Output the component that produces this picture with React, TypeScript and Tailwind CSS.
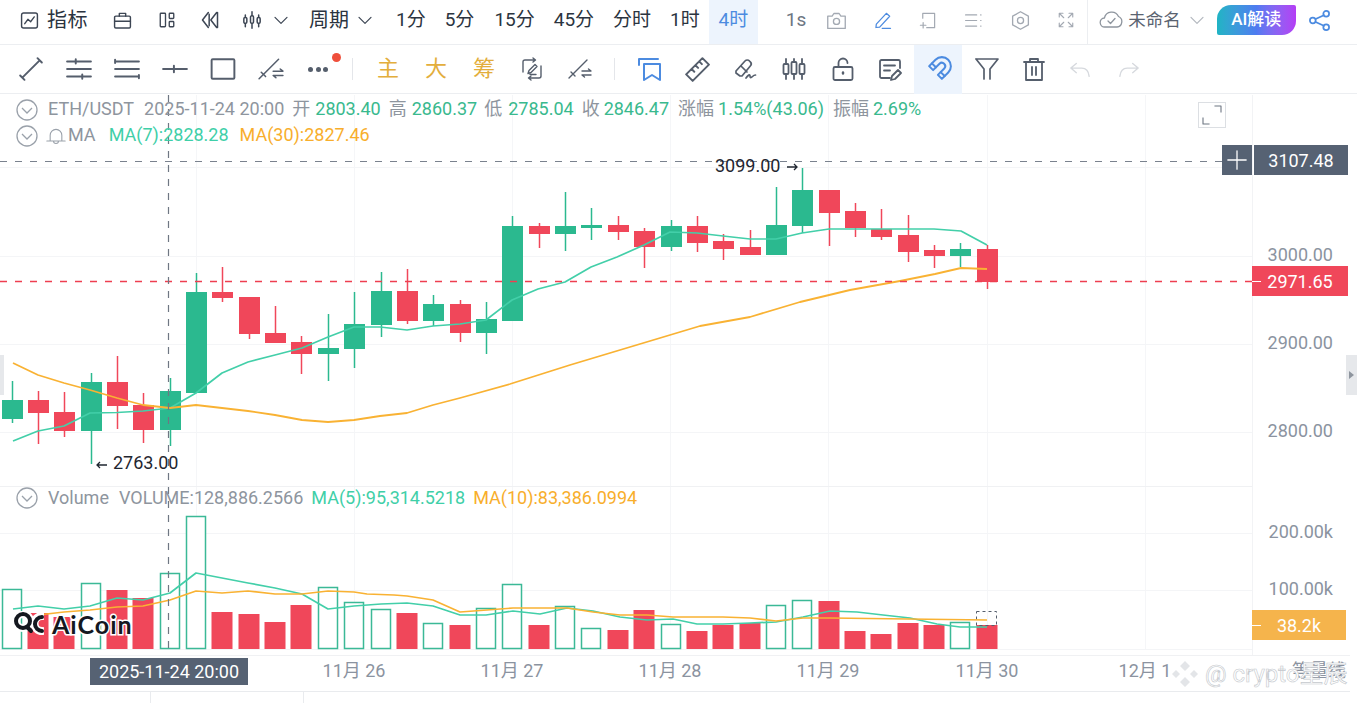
import type { ReactNode } from "react";

const cjk = "font-['Roboto','Noto_Sans_CJK_SC',sans-serif]";

// candles: [body top, body bottom, wick top, wick bottom, up?]
const candles: [number, number, number, number, boolean][] = [
  [400, 419, 381, 423, true],
  [400, 413, 391, 444, false],
  [412, 431, 392, 437, false],
  [382, 431, 373, 464, true],
  [382, 406, 356, 429, false],
  [405, 430, 393, 443, false],
  [391, 430, 378, 446, true],
  [292, 393, 273, 393, true],
  [292, 298, 267, 302, false],
  [297, 334, 297, 339, false],
  [333, 343, 306, 343, false],
  [342, 354, 336, 374, false],
  [348, 354, 314, 381, true],
  [324, 349, 292, 368, true],
  [291, 325, 272, 337, true],
  [291, 321, 269, 324, false],
  [304, 321, 295, 326, true],
  [304, 333, 300, 342, false],
  [319, 333, 302, 354, true],
  [226, 321, 216, 321, true],
  [226, 234, 223, 248, false],
  [226, 234, 192, 251, true],
  [225, 228, 208, 240, true],
  [225, 232, 216, 240, false],
  [231, 247, 228, 268, false],
  [226, 247, 220, 251, true],
  [226, 243, 216, 252, false],
  [241, 249, 234, 260, false],
  [247, 255, 230, 255, false],
  [225, 255, 187, 255, true],
  [190, 226, 168, 233, true],
  [190, 213, 190, 246, false],
  [211, 228, 203, 237, false],
  [229, 237, 209, 240, false],
  [235, 252, 215, 262, false],
  [250, 256, 245, 268, false],
  [249, 256, 243, 267, true],
  [249, 282, 245, 289, false],
];

const volumes: [number, boolean][] = [
  [589, true], [613, false], [617, false], [583, true], [590, false], [598, false],
  [573, true], [516, true], [612, false], [614, false], [622, false], [605, false],
  [587, true], [602, true], [609, true], [613, false], [623, true], [625, false],
  [608, true], [584, true], [625, false], [606, true], [628, true], [630, false],
  [610, false], [624, true], [631, false], [625, false], [623, false], [605, true],
  [600, true], [601, false], [631, false], [634, false], [623, false], [625, false],
  [622, true], [625, false],
];

const cx = (i: number) => 11.5 + i * 26.36;

const ma7 = "13,441 38,431 64,426 90,413 117,412.5 143,411 170,408 196,393 222,373 248,362 275,355 302,348 328,337 354,327 380,327 407,330 433,326 460,324 486,320 512,300 538,289 565,282 591,267 617,257 644,245 670,232 697,233 723,236 750,239 776,239 802,233 829,229 855,229 881,229 908,229 934,229 961,231 987,245";
const ma30 = "13,363 38,375 64,383 90,390 117,398 143,405 170,408 196,405 222,408 248,411 275,415 302,420 328,422 354,420 380,416 407,413 433,405 460,398 510,384 570,365 640,344 700,326 750,317 800,302 850,290 900,281 935,274 961,268 987,269";
const volMa5 = "13,609 38,606 64,609 90,606 117,598 143,600 170,593 196,573 222,578 248,583 275,588 302,594 328,609 354,606 381,604 407,603 433,606 460,615 486,615 513,611 540,614 567,608 593,611 620,617 647,620 673,619 697,624 723,624 750,623 776,622 803,617 830,611 857,612 883,615 910,618 937,624 960,627 987,627";
const volMa10 = "38,615 64,612 90,610 117,607 143,606 170,600 196,591 222,593 248,591 275,594 302,594 328,591 354,592 367,594 394,595 407,596 433,600 460,612 487,610 513,608 567,608 593,612 620,615 647,615 673,617 723,617 750,618 776,621 803,618 830,618 987,620";

function Ic({ size = 24, className = "", children }: { size?: number; className?: string; children: ReactNode }) {
  return (
    <svg
      width={size}
      height={size}
      viewBox="0 0 24 24"
      fill="none"
      stroke="currentColor"
      strokeWidth="1.8"
      strokeLinecap="round"
      strokeLinejoin="round"
      className={`shrink-0 ${className}`}
    >
      {children}
    </svg>
  );
}

function Chevron({ className = "" }: { className?: string }) {
  return (
    <Ic size={16} className={className}>
      <polyline points="3,8 12,17 21,8" />
    </Ic>
  );
}

function CircleChevron() {
  return (
    <svg width="22" height="22" viewBox="0 0 22 22" fill="none" stroke="#9aa1aa" strokeWidth="1.3" className="shrink-0">
      <circle cx="11" cy="11" r="10" />
      <polyline points="6,9 11,14 16,9" />
    </svg>
  );
}

function Period({ label, className }: { label: string; className: string }) {
  return <span className={`text-[19px] text-[#2b3440] ${className}`}>{label}</span>;
}

function TopBar() {
  return (
    <header className={`flex h-[45px] items-center border-b border-[#eceef1] pb-[4px] text-[#3d4654] ${cjk}`}>
      <Ic size={19} className="ml-[20px]">
        <rect x="2" y="2.5" width="20" height="19" rx="2.5" />
        <polyline points="6,16 10,10.5 13.5,13.5 18,7.5" />
      </Ic>
      <span className="ml-[8px] text-[20px] tracking-[0.5px] text-[#2b3440]">指标</span>
      <Ic size={19} className="ml-[25px]">
        <rect x="2" y="6.5" width="20" height="15" rx="1.5" />
        <path d="M8 6.5V3h8v3.5M2 13h20" />
      </Ic>
      <Ic size={18} className="ml-[26px]">
        <rect x="3" y="3" width="7" height="18" rx="1" />
        <rect x="15" y="3" width="6" height="7" rx="1" />
        <rect x="15" y="14" width="6" height="7" rx="1" />
      </Ic>
      <Ic size={20} className="ml-[24px]">
        <path d="M10 3 3 12l7 9M11 5v14" />
        <path d="M20 3l-7 9 7 9M21 3v18" />
      </Ic>
      <Ic size={20} className="ml-[22px]">
        <path d="M4 6v14M12 2v20M20 6v14" />
        <rect x="2.2" y="9" width="3.6" height="7" rx="1.5" fill="#fff" />
        <rect x="10.2" y="7" width="3.6" height="9" rx="1.5" fill="#fff" />
        <rect x="18.2" y="9" width="3.6" height="7" rx="1.5" fill="#fff" />
      </Ic>
      <Chevron className="ml-[11px]" />
      <span className="ml-[20px] text-[20px] text-[#2b3440]">周期</span>
      <Chevron className="ml-[8px]" />
      <Period label="1分" className="ml-[23px]" />
      <Period label="5分" className="ml-[19px]" />
      <Period label="15分" className="ml-[20px]" />
      <Period label="45分" className="ml-[19px]" />
      <Period label="分时" className="ml-[19px]" />
      <Period label="1时" className="ml-[19px]" />
      <div className="-mb-[4px] ml-[9px] flex h-[44px] w-[49px] items-center justify-center bg-[#edf4fd] pb-[4px] text-[19px] text-[#4c8be0]">4时</div>
      <span className="ml-[28px] text-[19px] text-[#6d7682]">1s</span>
      <Ic size={21} className="ml-[20px] text-[#a3a9b2]">
        <path d="M2 7h5l2-3h6l2 3h5v14H2z" strokeWidth="1.5" />
        <circle cx="12" cy="13" r="3.5" strokeWidth="1.5" />
      </Ic>
      <Ic size={20} className="ml-[26px] text-[#4c8be0]">
        <path d="M4 17 16 4l4 3.5L8 20.5l-4.5.5zM11 22h10" strokeWidth="1.5" />
      </Ic>
      <Ic size={19} className="ml-[25px] text-[#a3a9b2]">
        <path d="M6 9V3h15v18H11M3 18h7M6.5 14.5v7" strokeWidth="1.5" />
      </Ic>
      <Ic size={19} className="ml-[27px] text-[#a3a9b2]">
        <path d="M2 5h14M2 12h14M2 19h14M21 5h.5M21 12h.5M21 19h.5" strokeWidth="1.5" />
      </Ic>
      <Ic size={21} className="ml-[27px] text-[#a3a9b2]">
        <path d="M12 2 21 7v10l-9 5-9-5V7z" strokeWidth="1.5" />
        <circle cx="12" cy="12" r="3.5" strokeWidth="1.5" />
      </Ic>
      <Ic size={18} className="ml-[26px] text-[#a3a9b2]">
        <path d="M3 8V3h5M21 8V3h-5M3 16v5h5M21 16v5h-5M4 4l5 5M20 4l-5 5M4 20l5-5M20 20l-5-5" strokeWidth="1.5" />
      </Ic>
      <div className="-mb-[4px] ml-[12px] h-[44px] w-px bg-[#eceef1]" />
      <Ic size={24} className="ml-[11px] text-[#8e959e]">
        <path d="M7 19H6a4.500 4.500 0 0 1-.6-9A7.500 7.500 0 0 1 19.500 8.500 5.500 5.500 0 0 1 18 19z" strokeWidth="1.3" />
        <polyline points="9,13 11.5,15.5 16,10.5" strokeWidth="1.3" />
      </Ic>
      <span className="ml-[5px] text-[17.5px] text-[#5a6370]">未命名</span>
      <Chevron className="ml-[8px] text-[#b3b8bf]" />
      <div className="ml-[12px] flex h-[30px] w-[79px] items-center justify-center rounded-tl-[14px] rounded-br-[14px] rounded-tr-[2px] rounded-bl-[2px] bg-gradient-to-r from-[#1fb4c4] via-[#4e7bf0] to-[#b43cf5] text-[17px] font-medium text-white">
        AI解读
      </div>
      <Ic size={23} className="ml-[12px] text-[#4c8be0]">
        <circle cx="19" cy="5" r="3" />
        <circle cx="5" cy="12" r="3" />
        <circle cx="19" cy="19" r="3" />
        <path d="m8 10.500 8.500-4M8 13.500l8.500 4" />
      </Ic>
    </header>
  );
}

function ToolBar() {
  const dim = "text-[#555e6c]";
  return (
    <div className={`flex h-[49px] items-center border-b border-[#eceef1] ${cjk} ${dim}`}>
      <Ic size={26} className="ml-[18px]">
        <path d="M4 20 20 4M2 18l4 4M18 2l4 4" />
      </Ic>
      <Ic size={26} className="ml-[22px]">
        <path d="M1 5h22M1 12h22M1 19h22M9 3v4M15 17v4" />
      </Ic>
      <Ic size={26} className="ml-[22px]">
        <path d="M1 5h22M1 12h22M1 19h22M1 3.500v3M23 17.500v3" />
      </Ic>
      <Ic size={26} className="ml-[22px]">
        <path d="M1 12h22M11 9v6" />
      </Ic>
      <Ic size={26} className="ml-[22px]">
        <rect x="1.500" y="3" width="21" height="18" rx="1" />
      </Ic>
      <Ic size={26} className="ml-[22px]">
        <path d="M1 21 19 3M3 15l4 4" strokeWidth="1.400" />
        <path d="M14 14h9l-2.500-2M23 18h-9l2.500 2" strokeWidth="1.400" />
      </Ic>
      <div className="relative ml-[24px] flex w-[20px] items-center justify-between">
        <span className="size-[5px] rounded-full bg-[#555e6c]" />
        <span className="size-[5px] rounded-full bg-[#555e6c]" />
        <span className="size-[5px] rounded-full bg-[#555e6c]" />
        <span className="absolute -top-[14px] -right-[13px] size-[9px] rounded-full bg-[#ef4f3b]" />
      </div>
      <div className="ml-[24px] h-[22px] w-px bg-[#e4e6ea]" />
      <span className="ml-[24px] text-[22px] leading-none text-[#e3ae3c]">主</span>
      <span className="ml-[26px] text-[22px] leading-none text-[#e3ae3c]">大</span>
      <span className="ml-[26px] text-[22px] leading-none text-[#e3ae3c]">筹</span>
      <Ic size={24} className="ml-[25px]">
        <path d="M3 15V5q0-2 2-2h10M13 1l2.500 2L13 5M21 9v10q0 2-2 2H9M11 23l-2.500-2 2.500-2" strokeWidth="1.400" />
        <path d="M8 16.500l1-3 6-6 2 2-6 6zM10 17.500h6" strokeWidth="1.400" />
      </Ic>
      <Ic size={24} className="ml-[24px]">
        <path d="M1 21 19 3M3 15l4 4" strokeWidth="1.400" />
        <path d="M14 14h9l-2.500-2M23 18h-9l2.500 2" strokeWidth="1.400" />
      </Ic>
      <div className="ml-[22px] h-[22px] w-px bg-[#e4e6ea]" />
      <Ic size={24} className="ml-[23px] text-[#4c8be0]">
        <path d="M1 8V2h19" strokeWidth="2" />
        <path d="M6 7h16v16l-8-5-8 5z" strokeWidth="2" />
      </Ic>
      <Ic size={26} className="ml-[22px]">
        <path d="M2 17 17 2l6 6L8 23zM7 12l2.500 2.500M10.500 8.500l2.500 2.500M14 5l2.500 2.500" />
      </Ic>
      <Ic size={24} className="ml-[23px]">
        <path d="m3 14 9-10a3 3 0 0 1 4.500 0l.8.8a3 3 0 0 1 0 4.200L9 19H7l-4-3zM8 9l6 6" strokeWidth="1.700" />
        <path d="M13 21c2-3 4-4 4-2s1 2 2.500.5 2-1.500 3-1.500" strokeWidth="1.700" />
      </Ic>
      <Ic size={24} className="ml-[25px]">
        <path d="M4 2v20M12 2v20M20 2v20" />
        <rect x="1.500" y="7" width="5" height="10" rx="1" fill="#fff" />
        <rect x="9.500" y="5" width="5" height="12" rx="1" fill="#fff" />
        <rect x="17.500" y="7" width="5" height="10" rx="1" fill="#fff" />
      </Ic>
      <Ic size={24} className="ml-[25px]">
        <rect x="2.500" y="10" width="19" height="13" rx="1.500" />
        <path d="M7.500 10V6a4.500 4.500 0 0 1 9 0" />
        <path d="M12 15.500v1" strokeWidth="2.400" />
      </Ic>
      <Ic size={24} className="ml-[23px]">
        <path d="M12 21H3.500A1.500 1.500 0 0 1 2 19.500v-15A1.500 1.500 0 0 1 3.500 3h17A1.500 1.500 0 0 1 22 4.500V11M6 8.500h11M6 13.500h6" />
        <path d="m13 23 1-4 6-6 3 3-6 6z" />
      </Ic>
      <div className="ml-[12px] flex h-[49px] w-[48px] items-center justify-center bg-[#edf4fd] text-[#4c8be0]">
        <Ic size={27}>
          <path d="M3.680 9 9.340 3.340A8 8 0 0 1 20.660 14.660L15 20.320 11.460 16.780 17.120 11.120A3 3 0 0 0 12.880 6.880L7.220 12.540Z" strokeWidth="1.800" />
          <path d="M6.150 6.530 9.690 10.070M17.470 17.850 13.930 14.310" strokeWidth="1.800" />
        </Ic>
      </div>
      <Ic size={24} className="ml-[13px]">
        <path d="M1 2h22l-8 10v10M9 22V12L1 2" strokeWidth="1.700" />
      </Ic>
      <Ic size={24} className="ml-[23px]">
        <path d="M2 5h20M8 5V2h8v3M4 5v18h16V5M10 10v8M14 10v8" />
      </Ic>
      <Ic size={22} className="ml-[23px] text-[#d6d9de]">
        <path d="M8 6 2 11l6 5M2 11h12q7 0 8 9" strokeWidth="1.500" />
      </Ic>
      <Ic size={22} className="ml-[27px] text-[#d6d9de]">
        <path d="M16 6l6 5-6 5M22 11H10q-7 0-8 9" strokeWidth="1.500" />
      </Ic>
    </div>
  );
}

function ChartDrawing() {
  return (
    <svg className="absolute inset-0" width="1357" height="609" viewBox="0 94 1357 609" fill="none">
      {/* grid */}
      {[196, 354, 512, 670, 828, 987, 1145].map((x) => (
        <line key={x} x1={x + 0.5} y1="95" x2={x + 0.5} y2="649" stroke="#f5f6f8" />
      ))}
      {[167, 256, 344, 432, 533, 590, 649].map((y) => (
        <line key={y} x1="0" y1={y + 0.5} x2="1252" y2={y + 0.5} stroke="#f4f5f7" />
      ))}
      <line x1="1252.500" y1="95" x2="1252.500" y2="655" stroke="#f2f3f5" />
      <line x1="0" y1="486.500" x2="1252" y2="486.500" stroke="#f0f1f3" />
      <line x1="0" y1="655.500" x2="1350" y2="655.500" stroke="#f0f1f3" />
      <line x1="0" y1="691.500" x2="1350" y2="691.500" stroke="#e9ebee" />
      <line x1="150.500" y1="692" x2="150.500" y2="703" stroke="#e9ebee" />
      <line x1="303.500" y1="692" x2="303.500" y2="703" stroke="#e9ebee" />

      {/* volume */}
      {volumes.map(([top, up], i) =>
        up ? (
          <rect key={i} x={Math.round(cx(i)) - 9.5} y={top + 0.5} width="19" height={648 - top} stroke="#3bb996" strokeWidth="1.500" fill="#fff" />
        ) : (
          <rect key={i} x={Math.round(cx(i)) - 10.5} y={top} width="21" height={649 - top} fill="#f0475a" />
        )
      )}
      <rect x="976.500" y="611.500" width="20" height="14" stroke="#555e6c" strokeDasharray="3 3" />
      <polyline points={volMa5} stroke="#43cfa9" strokeWidth="1.700" strokeLinejoin="round" />
      <polyline points={volMa10} stroke="#f9b233" strokeWidth="1.700" strokeLinejoin="round" />

      {/* candles */}
      {candles.map(([top, bottom, wt, wb, up], i) => {
        const x = Math.round(cx(i));
        const fill = up ? "#2bb98f" : "#f0475a";
        return (
          <g key={i}>
            <line x1={x + 0.5} y1={wt} x2={x + 0.5} y2={wb} stroke={fill} strokeWidth="1.500" />
            <rect x={x - 10} y={top} width="21" height={bottom - top} fill={fill} />
          </g>
        );
      })}
      <polyline points={ma7} stroke="#43cfa9" strokeWidth="1.700" strokeLinejoin="round" />
      <polyline points={ma30} stroke="#f9b233" strokeWidth="1.800" strokeLinejoin="round" />

      {/* crosshair and price lines */}
      <line x1="0" y1="161.500" x2="1222" y2="161.500" stroke="#7a828e" strokeWidth="1.200" strokeDasharray="7 8" />
      <line x1="0" y1="281.500" x2="1252" y2="281.500" stroke="#ee3f50" strokeWidth="1.500" strokeDasharray="7 8" />
      <line x1="168.500" y1="95" x2="168.500" y2="655" stroke="#6f7783" strokeWidth="1.200" strokeDasharray="7 7" />

      {/* high / low arrows */}
      <path d="M787 167h10m-3-3 3 3-3 3" stroke="#1f2630" strokeWidth="1.300" />
      <path d="M107 465H97m3-3-3 3 3 3" stroke="#1f2630" strokeWidth="1.300" />
    </svg>
  );
}

function AxisLabel({ y, children }: { y: string; children: ReactNode }) {
  return <span className={`absolute right-[24px] text-[18px] leading-none text-[#8b93a0] ${y}`}>{children}</span>;
}

function TimeLabel({ label, className }: { label: string; className: string }) {
  return <span className={`absolute top-[568px] w-[90px] text-center text-[18px] leading-none text-[#8b93a0] ${className}`}>{label}</span>;
}

function Aicoin() {
  return (
    <div className="absolute top-[517px] left-[13px] flex items-center gap-[8px]">
      <svg width="31" height="26" viewBox="0 0 31 26" fill="none" strokeLinecap="round">
        <g stroke="#fff" strokeWidth="8">
          <circle cx="10" cy="10" r="7" />
          <path d="M29 5a6.500 6.500 0 1 0 0 15" />
        </g>
        <g stroke="#14181f" strokeWidth="4">
          <circle cx="10" cy="10" r="7" />
          <path d="M14 16l4 4" />
          <path d="M29 6a6 6 0 1 0 0 14" />
        </g>
      </svg>
      <span className="text-[25px] font-bold leading-none tracking-[1px] text-[#14181f] font-['Lato',sans-serif] [paint-order:stroke] [-webkit-text-stroke:3px_#fff]">AiCoin</span>
    </div>
  );
}

function Chart() {
  return (
    <section className={`relative h-[609px] overflow-hidden ${cjk}`}>
      <ChartDrawing />

      {/* legends */}
      <div className="absolute top-[5px] left-[16px] flex h-[22px] items-center text-[18px] leading-[22px] text-[#8e959e]">
        <CircleChevron />
        <span className="relative -top-px ml-[10px]">ETH/USDT</span>
        <span className="relative -top-px ml-[10px]">2025-11-24 20:00</span>
        <span className="relative -top-px ml-[8px]">开</span>
        <span className="relative -top-px ml-[5px] text-[#39b98e]">2803.40</span>
        <span className="relative -top-px ml-[8px]">高</span>
        <span className="relative -top-px ml-[5px] text-[#39b98e]">2860.37</span>
        <span className="relative -top-px ml-[7px]">低</span>
        <span className="relative -top-px ml-[6px] text-[#39b98e]">2785.04</span>
        <span className="relative -top-px ml-[8px]">收</span>
        <span className="relative -top-px ml-[4px] text-[#39b98e]">2846.47</span>
        <span className="relative -top-px ml-[9px]">涨幅</span>
        <span className="relative -top-px ml-[4px] text-[#39b98e]">1.54%(43.06)</span>
        <span className="relative -top-px ml-[9px]">振幅</span>
        <span className="relative -top-px ml-[4px] text-[#39b98e]">2.69%</span>
      </div>
      <div className="absolute top-[31px] left-[16px] flex h-[22px] items-center text-[18px] leading-[22px] text-[#8e959e]">
        <CircleChevron />
        <Ic size={20} className="ml-[8px] text-[#9aa1aa]">
          <path d="M1 18h22M5 18v-7a7 7 0 0 1 14 0v7M9 18a3 3 0 0 0 6 0" strokeWidth="1.300" />
        </Ic>
        <span className="relative -top-px ml-[2px]">MA</span>
        <span className="relative -top-px ml-[13px] text-[#3fcfa8]">MA(7):2828.28</span>
        <span className="relative -top-px ml-[11px] text-[#f8ae2c]">MA(30):2827.46</span>
      </div>
      <div className="absolute top-[393px] left-[16px] flex h-[22px] items-center text-[18px] leading-[22px] text-[#8e959e]">
        <CircleChevron />
        <span className="ml-[10px]">Volume</span>
        <span className="ml-[10px]">VOLUME:128,886.2566</span>
        <span className="ml-[8px] text-[#3fcfa8]">MA(5):95,314.5218</span>
        <span className="ml-[8px] text-[#f8ae2c]">MA(10):83,386.0994</span>
      </div>

      {/* fullscreen toggle */}
      <div className="absolute top-[8px] left-[1198px] flex h-[26px] w-[28px] items-center justify-center border border-[#dcdfe3]">
        <Ic size={24} className="text-[#6d7682]">
          <path d="M15 3h6v6M3 15v6h6" strokeWidth="1.100" strokeLinecap="square" />
        </Ic>
      </div>

      {/* high / low values */}
      <span className="absolute top-[63px] left-[715px] text-[18px] leading-[18px] text-[#1f2630]">3099.00</span>
      <span className="absolute top-[360px] left-[113px] text-[18px] leading-[18px] text-[#1f2630]">2763.00</span>

      {/* price axis */}
      <AxisLabel y="top-[152px]">3000.00</AxisLabel>
      <AxisLabel y="top-[240px]">2900.00</AxisLabel>
      <AxisLabel y="top-[328px]">2800.00</AxisLabel>
      <AxisLabel y="top-[429px]">200.00k</AxisLabel>
      <AxisLabel y="top-[486px]">100.00k</AxisLabel>

      <div className="absolute top-[51px] left-[1222px] flex h-[30px] items-center gap-[2px] text-white">
        <div className="flex h-full w-[30px] items-center justify-center bg-[#566273]">
          <Ic size={22}>
            <path d="M12 2v20M2 12h20" strokeWidth="1.400" />
          </Ic>
        </div>
        <div className="flex h-full w-[94px] items-center justify-center bg-[#566273] text-[18px]">3107.48</div>
      </div>
      <div className="absolute top-[172px] left-[1252px] flex h-[30px] w-[96px] items-center justify-center bg-[#f0475a] text-[18px] text-white">
        <span className="absolute left-0 h-px w-[9px] bg-white" />
        2971.65
      </div>
      <div className="absolute top-[516px] left-[1252px] flex h-[30px] w-[94px] items-center justify-center bg-[#f5b44c] text-[18px] text-white">
        <span className="absolute left-0 h-px w-[9px] bg-white" />
        38.2k
      </div>

      <Aicoin />

      {/* time axis */}
      <div className="absolute top-[564px] left-[90px] flex h-[27px] w-[158px] items-center justify-center bg-[#566273] text-[18px] text-white">
        2025-11-24 20:00
      </div>
      <TimeLabel label="11月 26" className="left-[309px]" />
      <TimeLabel label="11月 27" className="left-[467px]" />
      <TimeLabel label="11月 28" className="left-[625px]" />
      <TimeLabel label="11月 29" className="left-[783px]" />
      <TimeLabel label="11月 30" className="left-[942px]" />
      <TimeLabel label="12月 1" className="left-[1100px]" />
      <span className="absolute top-[568px] left-[1292px] text-[18px] leading-none text-[#8b93a0]">等量线</span>

      {/* side handles */}
      <div className="absolute top-[261px] left-0 h-[40px] w-[4px] bg-[#e6e8eb]" />
      <div className="absolute top-[261px] right-0 flex h-[40px] w-[11px] items-center justify-center bg-[#e6e8eb]">
        <span className="h-0 w-0 border-y-[4px] border-l-[5px] border-y-transparent border-l-[#8e959e]" />
      </div>

      {/* repost watermark */}
      <div className="absolute top-[566px] left-[1171px] flex items-center gap-[6px]">
        <svg width="28" height="28" viewBox="0 0 28 28" fill="#e3e5e8">
          <path d="M14 1l5 5-5 5-5-5zM5 10l4 4-4 4-4-4zM23 10l4 4-4 4-4-4zM14 17l5 5-5 5-5-5z" />
        </svg>
        <span className="text-[24px] leading-none text-white [-webkit-text-stroke:0.6px_#c4c8cd]">@ crypto星辰</span>
      </div>
    </section>
  );
}

export default function App() {
  return (
    <main className="h-[703px] w-[1357px] overflow-hidden bg-white">
      <TopBar />
      <ToolBar />
      <Chart />
    </main>
  );
}
